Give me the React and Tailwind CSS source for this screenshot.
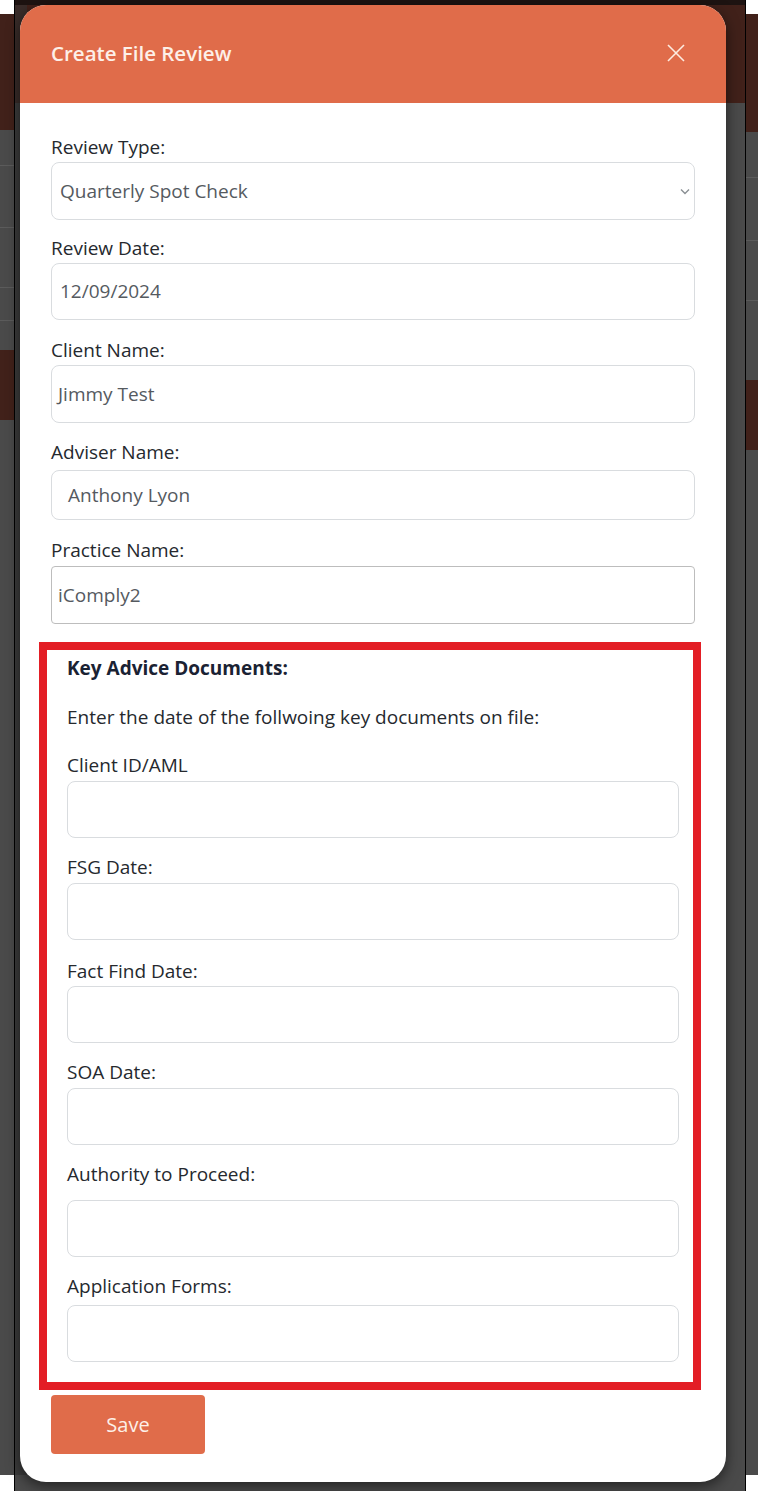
import React from 'react';

const Band = ({ h, tone }) => {
    const tones = {
        white: 'bg-white',
        top: 'bg-[#1d1311]',
        brown: 'bg-[#41211a]',
        gray: 'bg-[#4a4a4a]',
        line: 'bg-[#5b5b5b]',
        shade: 'bg-[#3b3b3b]',
    };
    return <div className={tones[tone]} style={{ height: h }} />;
};

const Strip = ({ bands, className }) => (
    <div className={`flex flex-col ${className}`}>
        {bands.map(([h, tone], i) => <Band key={i} h={h} tone={tone} />)}
    </div>
);

const Field = ({ label, value, gap = 'mt-[3px]', h = 'h-[58px]', pad = 'px-2', border = 'border-[#d9dcdf] rounded-[8px]', className = '', children }) => (
    <div className={className}>
        <label className="block text-[19px] leading-6 text-[#25292e]">{label}</label>
        <div className={`${gap} ${h} ${pad} ${border} border bg-white flex items-center text-[19px] text-[#555a5f]`}>
            {value}
            {children}
        </div>
    </div>
);

const App = () => {
    const left = [[14, 'white'], [116, 'brown'], [35, 'gray'], [1, 'line'], [61, 'gray'], [1, 'line'], [59, 'gray'], [1, 'line'], [32, 'gray'], [1, 'line'], [29, 'gray'], [70, 'brown'], [1055, 'gray'], [16, 'white']];
    const right = [[14, 'white'], [118, 'brown'], [45, 'gray'], [1, 'line'], [62, 'gray'], [1, 'line'], [59, 'gray'], [1, 'line'], [79, 'gray'], [70, 'brown'], [1025, 'gray'], [16, 'white']];
    const mid = [[5, 'top'], [98, 'brown'], [1372, 'gray'], [16, 'gray']];

    return (
        <div className="relative w-[758px] h-[1491px] overflow-hidden bg-white" style={{ fontFamily: '"Open Sans", "Liberation Sans", Arial, sans-serif' }}>
            {/* page behind the modal, dimmed */}
            <div className="flex h-full">
                <Strip bands={left} className="w-[14px]" />
                <div className="w-px bg-black" />
                <Strip bands={mid} className="flex-1" />
                <div className="w-px bg-black" />
                <Strip bands={right} className="w-[12px]" />
            </div>
            <div className="absolute left-[15px] top-[5px] w-[12px] h-[1470px] bg-[#333]/60" />

            {/* modal */}
            <div className="absolute left-[20px] top-[5px] w-[706px] h-[1477px] bg-white rounded-[26px] overflow-hidden shadow-[0_4px_14px_rgba(0,0,0,0.55)]">
                <div className="h-[98px] bg-[#e06c4a] flex items-center justify-between pl-[31px] pr-[41px]">
                    <h2 className="text-[20.5px] font-semibold text-[#fdf0e8] -mt-[2px]">Create File Review</h2>
                    <svg width="18" height="18" viewBox="0 0 18 18" stroke="#fdebe0" strokeWidth="1.6" fill="none" className="-mt-[2px]">
                        <path d="M1 1l16 16M17 1L1 17" />
                    </svg>
                </div>

                <div className="pt-[32px] px-[31px] pb-[30px]">
                    <Field label="Review Type:" value="Quarterly Spot Check">
                        <svg width="10" height="7" viewBox="0 0 10 7" className="ml-auto -mr-[4px]" fill="none" stroke="#8a8f94" strokeWidth="1.4">
                            <path d="M1 1.5l4 4 4-4" />
                        </svg>
                    </Field>
                    <Field label="Review Date:" value="12/09/2024" h="h-[57px]" className="mt-4" />
                    <Field label="Client Name:" value="Jimmy Test" className="mt-[18px]" pad="px-[6px]" />
                    <Field label="Adviser Name:" value="Anthony Lyon" gap="mt-[6px]" h="h-[50px]" pad="px-4" className="mt-[17px]" />
                    <Field label="Practice Name:" value="iComply2" gap="mt-1" pad="px-[6px]" border="border-[#bdbdbd] rounded-[4px]" className="mt-[18px]" />

                    <div className="mt-[18px] -ml-[12px] -mr-[6px] border-[8px] border-[#e31e25] pt-[6px] pl-[20px] pr-[14px] pb-[20px]">
                        <p className="text-[19px] leading-6 font-bold text-[#1a2233]">Key Advice Documents:</p>
                        <p className="mt-[25px] text-[19px] leading-6 text-[#25292e]">Enter the date of the follwoing key documents on file:</p>
                        <Field label="Client ID/AML" gap="mt-1" h="h-[57px]" className="mt-6" />
                        <Field label="FSG Date:" gap="mt-1" h="h-[57px]" className="mt-[17px]" />
                        <Field label="Fact Find Date:" gap="mt-[3px]" h="h-[57px]" className="mt-[19px]" />
                        <Field label="SOA Date:" gap="mt-1" h="h-[57px]" className="mt-[17px]" />
                        <Field label="Authority to Proceed:" gap="mt-[14px]" h="h-[57px]" className="mt-[17px]" />
                        <Field label="Application Forms:" gap="mt-[7px]" h="h-[57px]" className="mt-[17px]" />
                    </div>

                    <button className="mt-[5px] w-[154px] h-[59px] bg-[#e06c4a] rounded-[4px] text-[20px] text-[#fdf0e8]">Save</button>
                </div>
            </div>
        </div>
    );
};

export default App;
